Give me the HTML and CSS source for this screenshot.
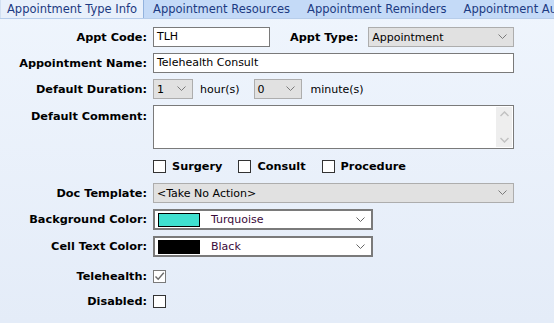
FILE: index.html
```html
<!DOCTYPE html>
<html lang="en">
  <head>
    <meta charset="UTF-8" />
    <title>Appointment Type</title>
    <link rel="stylesheet" href="styles.css">
  </head>
  <body>
    <div class="tabs">
      <div class="tab active">Appointment Type Info</div>
      <div class="tab">Appointment Resources</div>
      <div class="tab">Appointment Reminders</div>
      <div class="tab">Appointment Auto</div>
    </div>

    <div class="form">
      <div class="row">
        <div class="label">Appt Code:</div>
        <div class="field">
          <div class="input code">TLH</div>
          <div class="label inline">Appt Type:</div>
          <div class="select grey type">
            <span>Appointment</span>
            <svg class="chev" width="9" height="6" viewBox="0 0 9 6"><path d="M0.5 0.5 L4.5 4.5 L8.5 0.5" fill="none" stroke="#7a7a7a" stroke-width="1"/></svg>
          </div>
        </div>
      </div>

      <div class="row">
        <div class="label">Appointment Name:</div>
        <div class="field">
          <div class="input wide">Telehealth Consult</div>
        </div>
      </div>

      <div class="row">
        <div class="label">Default Duration:</div>
        <div class="field">
          <div class="select grey hours">
            <span>1</span>
            <svg class="chev" width="9" height="6" viewBox="0 0 9 6"><path d="M0.5 0.5 L4.5 4.5 L8.5 0.5" fill="none" stroke="#7a7a7a" stroke-width="1"/></svg>
          </div>
          <span class="unit">hour(s)</span>
          <div class="select grey minutes">
            <span>0</span>
            <svg class="chev" width="9" height="6" viewBox="0 0 9 6"><path d="M0.5 0.5 L4.5 4.5 L8.5 0.5" fill="none" stroke="#7a7a7a" stroke-width="1"/></svg>
          </div>
          <span class="unit last">minute(s)</span>
        </div>
      </div>

      <div class="row top">
        <div class="label">Default Comment:</div>
        <div class="field">
          <div class="textarea">
            <div class="scroll">
              <svg width="9" height="6" viewBox="0 0 9 6"><path d="M0.5 5 L4.5 1 L8.5 5" fill="none" stroke="#c2c2c2" stroke-width="1.5"/></svg>
              <svg width="9" height="6" viewBox="0 0 9 6"><path d="M0.5 1 L4.5 5 L8.5 1" fill="none" stroke="#c2c2c2" stroke-width="1.5"/></svg>
            </div>
          </div>
        </div>
      </div>

      <div class="row checks">
        <div class="label"></div>
        <div class="field">
          <span class="box"></span><span class="check-label">Surgery</span>
          <span class="box"></span><span class="check-label">Consult</span>
          <span class="box"></span><span class="check-label">Procedure</span>
        </div>
      </div>

      <div class="row">
        <div class="label">Doc Template:</div>
        <div class="field">
          <div class="select grey wide">
            <span>&lt;Take No Action&gt;</span>
            <svg class="chev" width="9" height="6" viewBox="0 0 9 6"><path d="M0.5 0.5 L4.5 4.5 L8.5 0.5" fill="none" stroke="#7a7a7a" stroke-width="1"/></svg>
          </div>
        </div>
      </div>

      <div class="row">
        <div class="label">Background Color:</div>
        <div class="field">
          <div class="select color">
            <span class="swatch turquoise"></span>
            <span class="color-name">Turquoise</span>
            <svg class="chev" width="9" height="6" viewBox="0 0 9 6"><path d="M0.5 0.5 L4.5 4.5 L8.5 0.5" fill="none" stroke="#666" stroke-width="1"/></svg>
          </div>
        </div>
      </div>

      <div class="row">
        <div class="label">Cell Text Color:</div>
        <div class="field">
          <div class="select color">
            <span class="swatch black"></span>
            <span class="color-name">Black</span>
            <svg class="chev" width="9" height="6" viewBox="0 0 9 6"><path d="M0.5 0.5 L4.5 4.5 L8.5 0.5" fill="none" stroke="#666" stroke-width="1"/></svg>
          </div>
        </div>
      </div>

      <div class="row flag first">
        <div class="label">Telehealth:</div>
        <div class="field">
          <span class="box checked">
            <svg width="11" height="11" viewBox="0 0 11 11"><path d="M1.5 5.5 L4.2 8.3 L9.8 1.8" fill="none" stroke="#6a6a6a" stroke-width="1.4"/></svg>
          </span>
        </div>
      </div>

      <div class="row flag">
        <div class="label">Disabled:</div>
        <div class="field">
          <span class="box"></span>
        </div>
      </div>
    </div>
  </body>
</html>
```

FILE: styles.css
```css
body {
  margin: 0;
  font-family: "DejaVu Sans", Verdana, sans-serif;
  font-size: 11px;
  line-height: 15px;
  color: #000;
  background: linear-gradient(#eff5fd, #e4ecf8);
  height: 323px;
  overflow: hidden;
}

.tabs {
  display: flex;
  height: 18px;
  background: #c4daf7;
  border-bottom: 1px solid #b7cdea;
  white-space: nowrap;
  overflow: hidden;
}

.tab {
  padding: 2px 8px 0 9px;
  color: #1c3a82;
  font-size: 11.5px;
}

.tab.active {
  background: #e8f0fb;
  border-left: 1px solid #d2e0f2;
  border-right: 1px solid #93b3de;
  padding: 2px 6px 0 6px;
}

.form {
  padding-top: 8px;
}

.row {
  display: flex;
  align-items: center;
  margin-bottom: 6px;
}

.row.top {
  align-items: flex-start;
}

.row.top .label {
  padding-top: 4px;
}

.label {
  width: 147px;
  flex: none;
  text-align: right;
  font-weight: bold;
  font-size: 11.3px;
  margin-right: 6px;
}

.field {
  display: flex;
  align-items: center;
}

.label.inline {
  width: auto;
  margin: 0 10px 0 20px;
}

.input {
  box-sizing: border-box;
  height: 20px;
  border: 1px solid #7a7a7a;
  background: #fff;
  padding: 0 3px;
  line-height: 18px;
}

.code {
  width: 117px;
}

.wide {
  width: 361px;
}

.select {
  box-sizing: border-box;
  height: 20px;
  display: flex;
  align-items: center;
  padding: 0 6px 0 3px;
}

.select span:first-child {
  flex: 1;
}

.select.grey {
  background: #e1e1e1;
  border: 1px solid #adadad;
}

.type {
  width: 146px;
}

.hours {
  width: 40px;
}

.minutes {
  width: 48px;
}

.unit {
  margin: 0 14px 0 7px;
}

.unit.last {
  margin-left: 9px;
}

.textarea {
  box-sizing: border-box;
  width: 361px;
  height: 44px;
  border: 1px solid #7a7a7a;
  background: #fff;
  display: flex;
  justify-content: flex-end;
  padding: 1px;
}

.scroll {
  width: 16px;
  background: #eeeeee;
  display: flex;
  flex-direction: column;
  align-items: center;
  justify-content: space-between;
  padding: 4px 0;
}

.checks {
  height: 15px;
  margin-top: 10px;
  margin-bottom: 9px;
}

.box {
  box-sizing: border-box;
  width: 13px;
  height: 13px;
  border: 1px solid #333;
  background: #fff;
  display: inline-flex;
  align-items: center;
  justify-content: center;
}

.box.checked {
  border-color: #7a7a7a;
}

.check-label {
  font-weight: bold;
  font-size: 11.3px;
  margin: 0 16px 0 6px;
}

.select.color {
  width: 220px;
  height: 21px;
  background: #fff;
  border: 2px solid #7a7a7a;
  padding: 0 6px 0 3px;
}

.swatch {
  flex: none !important;
  box-sizing: border-box;
  width: 42px;
  height: 14px;
  border: 1px solid #000;
}

.turquoise {
  background: #40e0d0;
}

.black {
  background: #000;
}

.color-name {
  flex: 1;
  margin-left: 11px;
  color: #3a0a3a;
}

.flag {
  height: 15px;
  margin-bottom: 10px;
}

.flag.first {
  margin-top: 12px;
}
```
